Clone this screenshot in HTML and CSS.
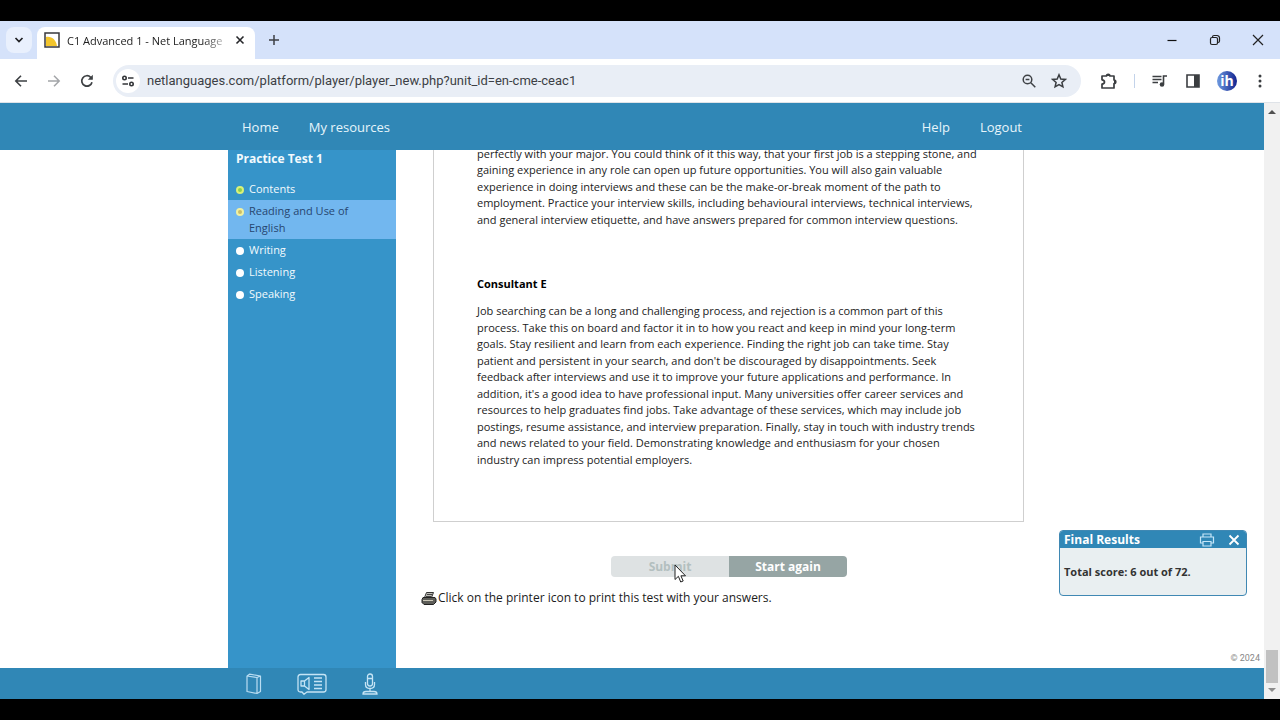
FILE: index.html
```html
<!DOCTYPE html>
<html lang="en">
<head>
<meta charset="utf-8">
<title>C1 Advanced 1 - Net Languages</title>
<link rel="stylesheet" href="styles.css">
</head>
<body>
<div class="browser">
  <div class="tabstrip">
    <button class="tab-search" aria-label="Search tabs"><svg width="10" height="10" viewBox="0 0 10 10"><path d="M1.5 3 5 6.5 8.500 3" fill="none" stroke="#1f2023" stroke-width="1.700"/></svg></button>
    <div class="tab">
      <svg class="favicon" width="16" height="16" viewBox="0 0 16 16"><rect x="1" y="1" width="14" height="14" fill="#fff" stroke="#38383c" stroke-width="1.500"/><path d="M2 5C8 4 12 8 13 14H2z" fill="#f3c52c"/></svg>
      <span class="tab-title">C1 Advanced 1 - Net Language</span>
      <button class="icon-btn tab-close" aria-label="Close tab"><svg width="10" height="10" viewBox="0 0 10 10"><path d="M1.500 1.500 8.500 8.500M8.500 1.500 1.500 8.500" stroke="#26272a" stroke-width="1.600"/></svg></button>
    </div>
    <button class="icon-btn new-tab" aria-label="New tab"><svg width="12" height="12" viewBox="0 0 12 12"><path d="M6 1v10M1 6h10" stroke="#3c3f44" stroke-width="1.500"/></svg></button>
    <div class="window-controls">
      <button class="icon-btn" aria-label="Minimize"><svg width="12" height="12" viewBox="0 0 12 12"><path d="M1.500 6.500h9" stroke="#111" stroke-width="1.200"/></svg></button>
      <button class="icon-btn" aria-label="Restore"><svg width="12" height="12" viewBox="0 0 12 12" fill="none" stroke="#222" stroke-width="1.200"><rect x="1.500" y="3.500" width="7" height="7" rx="1.500"/><path d="M3.500 3C3.500 2 4 1.500 5 1.500h3A2.500 2.500 0 0 1 10.500 4v3C10.500 8 10 8.500 9 8.500"/></svg></button>
      <button class="icon-btn" aria-label="Close"><svg width="12" height="12" viewBox="0 0 12 12"><path d="M1 1l10 10M11 1 1 11" stroke="#222" stroke-width="1.200"/></svg></button>
    </div>
  </div>

  <div class="toolbar">
    <button class="icon-btn" aria-label="Back"><svg width="14" height="14" viewBox="0 0 14 14"><path d="M13 7H2M7 1.800 1.800 7 7 12.200" fill="none" stroke="#3d4043" stroke-width="1.600"/></svg></button>
    <button class="icon-btn" aria-label="Forward"><svg width="14" height="14" viewBox="0 0 14 14"><path d="M1 7h11M7 1.800 12.200 7 7 12.200" fill="none" stroke="#a3a5a8" stroke-width="1.500"/></svg></button>
    <button class="icon-btn" aria-label="Reload"><svg width="14" height="14" viewBox="0 0 14 14"><path d="M12 8.200A5.200 5.200 0 1 1 10.700 3.300L12 4.700" fill="none" stroke="#3d4043" stroke-width="1.700"/><path d="M12.800.800V5.800H7.800z" fill="#3d4043"/></svg></button>
    <div class="omnibox">
      <button class="icon-btn site-info" aria-label="Site information"><svg width="14" height="12" viewBox="0 0 14 12" fill="none" stroke="#333538" stroke-width="1.600"><circle cx="3.500" cy="3" r="1.700"/><path d="M7 3h5.500M1.500 9H7"/><circle cx="10.500" cy="9" r="1.700"/></svg></button>
      <input class="url" type="text" aria-label="Address" value="netlanguages.com/platform/player/player_new.php?unit_id=en-cme-ceac1">
      <button class="icon-btn" aria-label="Zoom"><svg width="16" height="16" viewBox="0 0 16 16" fill="none" stroke="#3f4246" stroke-width="1.500"><circle cx="6.500" cy="6.500" r="4.300"/><path d="M9.800 9.800 14.300 14.300M4.600 6.500h3.800"/></svg></button>
      <button class="icon-btn" aria-label="Bookmark"><svg width="16" height="16" viewBox="0 0 16 16"><path d="M8 1.800 9.800 6l4.500.400-3.400 3 1 4.400L8 11.500l-3.900 2.300 1-4.400-3.400-3L6.200 6z" fill="none" stroke="#3a3d41" stroke-width="1.500"/></svg></button>
    </div>
    <div class="actions">
      <button class="icon-btn" aria-label="Extensions"><svg width="18" height="18" viewBox="0 0 18 18"><path d="M2 4h4.500a1.700 1.700 0 0 1 3.400 0H14v4a1.700 1.700 0 0 1 0 3.500V16H2v-4c3.300-.300 3.300-3.900 0-4.200z" fill="none" stroke="#3b3e41" stroke-width="1.700" stroke-linejoin="round"/><path d="M6.500 4a1.700 1.700 0 0 1 3.400 0zM14 8a1.700 1.700 0 0 1 0 3.500z" fill="#3b3e41"/></svg></button>
      <span class="divider"></span>
      <button class="icon-btn" aria-label="Media"><svg width="18" height="16" viewBox="0 0 18 16"><path d="M1.500 3.500h9M1.500 6.500h9M1.500 9.500h5.500M12.500 11V3H16" fill="none" stroke="#3b3e41" stroke-width="1.600"/><circle cx="11" cy="11.500" r="2.300" fill="#3b3e41"/></svg></button>
      <button class="icon-btn" aria-label="Side panel"><svg width="16" height="16" viewBox="0 0 16 16"><path d="M2 2h12v12H2z" fill="none" stroke="#3b3e41" stroke-width="1.600"/><path d="M9 2h5v12H9z" fill="#3b3e41"/></svg></button>
      <button class="icon-btn avatar" aria-label="Profile">ih</button>
      <button class="icon-btn menu" aria-label="Menu"><svg width="4" height="14" viewBox="0 0 4 14" fill="#3b3e41"><circle cx="2" cy="2" r="1.500"/><circle cx="2" cy="7" r="1.500"/><circle cx="2" cy="12" r="1.500"/></svg></button>
    </div>
  </div>

  <div class="viewport">
    <div class="site">
      <header class="topbar">
        <nav class="wrap topnav">
          <a href="#">Home</a>
          <a href="#">My resources</a>
          <a class="push" href="#">Help</a>
          <a href="#">Logout</a>
        </nav>
      </header>

      <div class="middle">
        <div class="wrap columns">
          <aside class="sidebar">
            <h1>Practice Test 1</h1>
            <a class="started" href="#">Contents</a>
            <a class="started current" href="#">Reading and Use of English</a>
            <a href="#">Writing</a>
            <a href="#">Listening</a>
            <a href="#">Speaking</a>
          </aside>
          <main class="content">
            <article class="card">
              <p>perfectly with your major. You could think of it this way, that your first job is a stepping stone, and<br>gaining experience in any role can open up future opportunities. You will also gain valuable<br>experience in doing interviews and these can be the make-or-break moment of the path to<br>employment. Practice your interview skills, including behavioural interviews, technical interviews,<br>and general interview etiquette, and have answers prepared for common interview questions.</p>
              <h2>Consultant E</h2>
              <p>Job searching can be a long and challenging process, and rejection is a common part of this<br>process. Take this on board and factor it in to how you react and keep in mind your long-term<br>goals. Stay resilient and learn from each experience. Finding the right job can take time. Stay<br>patient and persistent in your search, and don't be discouraged by disappointments. Seek<br>feedback after interviews and use it to improve your future applications and performance. In<br>addition, it's a good idea to have professional input. Many universities offer career services and<br>resources to help graduates find jobs. Take advantage of these services, which may include job<br>postings, resume assistance, and interview preparation. Finally, stay in touch with industry trends<br>and news related to your field. Demonstrating knowledge and enthusiasm for your chosen<br>industry can impress potential employers.</p>
            </article>
            <div class="buttons">
              <button class="submit" disabled>Submit</button>
              <button class="again">Start again</button>
              <svg class="cursor" width="12" height="19" viewBox="0 0 12 19"><path d="M1 1v14.500l3.400-3.200L6.700 18l2.500-1-2.300-5.200h4.600z" fill="#fff" stroke="#222"/></svg>
            </div>
            <div class="print-note">
              <svg width="16" height="16" viewBox="0 0 16 16"><path d="M5.500 2.500h7l-2 5h-7z" fill="#bdbdb6" stroke="#333"/><path d="M2 7.500h12l1 1.500v3l-2.500 2.500H3L1 12.500V9.500z" fill="#5d5d58" stroke="#222"/><path d="M2 10.500h10" stroke="#ccc8b8"/><path d="M6 4.500h5M5 6.500h5" stroke="#444"/></svg>
              <span>Click on the printer icon to print this test with your answers.</span>
            </div>
          </main>
        </div>

        <section class="results">
          <div class="results-head">
            <h2>Final Results</h2>
            <button class="icon-btn" aria-label="Print"><svg width="16" height="14" viewBox="0 0 16 14" fill="none" stroke="#c5e6f8" stroke-width="1.200"><path d="M4 4V1h8v3M4 10H1.500V4h13v6H12M4 8.500h8V13H4z"/></svg></button>
            <button class="icon-btn" aria-label="Close results"><svg width="12" height="12" viewBox="0 0 12 12"><path d="M1.500 1.500l9 9M10.500 1.500l-9 9" stroke="#fff" stroke-width="1.800"/></svg></button>
          </div>
          <p>Total score: 6 out of 72.</p>
        </section>
        <small class="copyright">© 2024</small>
      </div>

      <footer class="bottombar">
        <div class="wrap tools">
          <button class="icon-btn" aria-label="Dictionary"><svg width="16" height="22" viewBox="0 0 16 22" fill="none" stroke="#b9ddf2" stroke-width="1.200" stroke-linejoin="round"><path d="M1 3 11 4.500V20.500L1 18.500zM1 3 3.500 1.200 14.500 3V18.500L11 20.500M11 4.500 14.500 3"/></svg></button>
          <button class="icon-btn" aria-label="Audio script"><svg width="30" height="22" viewBox="0 0 30 22" fill="none" stroke="#c5e4f5" stroke-width="1.300" stroke-linejoin="round"><path d="M3.500 1.500h23Q29 1.500 29 4v12.500q0 2.500-2.500 2.500H10l-3 2.300L5 19H3.500Q1 19 1 16.500V4Q1 1.500 3.500 1.500zM4 8h3.500L12 4.500v12L7.500 13H4zM7.500 8v5"/><path d="M17 5h8M17 8.500h8M17 12h8M17 15.500h8"/></svg></button>
          <button class="icon-btn" aria-label="Record"><svg width="16" height="22" viewBox="0 0 16 22" fill="none" stroke="#c5e4f5" stroke-width="1.300"><rect x="5.500" y="1" width="5" height="12" rx="2.500"/><path d="M5.500 5.500h5M3.500 9v2.500q0 4 4.500 4t4.500-4V9M8 15.500v3M1 21q0-2.500 3-2.500h8q3 0 3 2.500z"/></svg></button>
        </div>
      </footer>
    </div>
    <div class="scrollbar">
      <svg width="8" height="4" viewBox="0 0 8 4"><path d="M0 4 4 0l4 4z" fill="#505050"/></svg>
      <span class="thumb"></span>
      <svg width="8" height="4" viewBox="0 0 8 4"><path d="M0 0l4 4 4-4z" fill="#8c8c8c"/></svg>
    </div>
  </div>
</div>
</body>
</html>
```
FILE: styles.css
```css
* { box-sizing: border-box; }

body {
  margin: 0;
  background: #000;
  font-family: "Open Sans", "Noto Sans", sans-serif;
  font-size: 11px;
  color: #222;
}

h1, h2, p { margin: 0; }
a { color: inherit; text-decoration: none; }
button { font: inherit; border: 0; padding: 0; }
svg { display: block; flex: none; }

.icon-btn {
  display: flex;
  align-items: center;
  justify-content: center;
  background: none;
}

.browser {
  display: flex;
  flex-direction: column;
  height: 100vh;
  padding: 21px 0;
}

/* Tab strip */
.tabstrip {
  display: flex;
  align-items: center;
  height: 38px;
  padding-left: 6px;
  background: #d5e2fa;
}
.tab-search {
  display: flex;
  align-items: center;
  justify-content: center;
  width: 26px;
  height: 26px;
  border-radius: 8px;
  background: #e9f0fd;
}
.tab {
  display: flex;
  align-items: center;
  align-self: stretch;
  width: 218px;
  margin: 6px 0 0 5px;
  padding: 0 10px 6px 7px;
  border-radius: 8px 8px 0 0;
  background: #fff;
}
.tab-title {
  flex: 1;
  min-width: 0;
  margin: 0 8px 0 7px;
  white-space: nowrap;
  mask-image: linear-gradient(to right, #000 85%, rgb(0 0 0 / 0.2));
}
.new-tab { margin-left: 13px; }
.window-controls {
  display: flex;
  gap: 31px;
  margin-left: auto;
  padding-right: 16px;
}

/* Toolbar */
.toolbar {
  display: flex;
  align-items: center;
  gap: 19px;
  height: 44px;
  padding: 0 18px 0 14px;
  background: #fff;
  border-bottom: 1px solid #dfe3e8;
}
.omnibox {
  display: flex;
  align-items: center;
  flex: 1;
  gap: 14px;
  height: 32px;
  padding: 0 14px 0 3px;
  border-radius: 16px;
  background: #e9eef6;
}
.site-info {
  width: 24px;
  height: 24px;
  border-radius: 50%;
  background: #fff;
}
.url {
  flex: 1;
  min-width: 0;
  margin-left: -7px;
  padding: 0;
  border: 0;
  background: none;
  font-family: Roboto, "Open Sans", sans-serif;
  font-size: 13px;
  color: #3c3f45;
}
.actions {
  display: flex;
  align-items: center;
  gap: 16px;
}
.divider {
  width: 1px;
  height: 14px;
  background: #c3d3ea;
}
.avatar {
  width: 20px;
  height: 20px;
  border-radius: 50%;
  background: linear-gradient(to right, #6f9be0, #12238f);
  color: #fff;
  font-size: 14px;
  font-weight: 700;
}
.menu { padding-left: 5px; }

/* Page */
.viewport {
  display: flex;
  flex: 1;
  min-height: 0;
  background: #fff;
}
.site {
  display: flex;
  flex-direction: column;
  flex: 1;
  min-width: 0;
}
.wrap {
  width: 100%;
  max-width: 808px;
  margin: 0 auto;
}
.topbar {
  display: flex;
  align-items: center;
  height: 47px;
  background: #3087b6;
}
.topnav {
  display: flex;
  gap: 30px;
  padding: 0 14px;
  font-size: 13px;
  font-weight: 500;
  line-height: 20px;
  color: #e6f5fb;
}
.push { margin-left: auto; }

.middle {
  position: relative;
  flex: 1;
  min-height: 0;
}
.columns {
  display: flex;
  height: 100%;
}
.sidebar {
  width: 168px;
  background: #3694c9;
  color: #f2fafd;
}
.sidebar h1 {
  padding: 0 8px;
  margin-bottom: 11px;
  font-size: 12px;
  line-height: 17px;
}
.sidebar a {
  display: block;
  position: relative;
  padding: 2px 30px 3px 21px;
  font-weight: 500;
  line-height: 17px;
}
.sidebar a::before {
  content: "";
  box-sizing: border-box;
  position: absolute;
  left: 8px;
  top: 8px;
  width: 8px;
  height: 8px;
  border-radius: 50%;
  background: #fff;
}
.sidebar .started::before {
  border: 2px solid #d8f27a;
  background: #8fd04c;
}
.sidebar .current {
  background: #72b7ef;
  color: #27466f;
}
.sidebar .current::before {
  border-color: #f2f1a0;
  background: #c9bd6a;
}

.content {
  display: flex;
  flex-direction: column;
  justify-content: flex-end;
  flex: 1;
  min-width: 0;
  padding: 0 12px 60px 25px;
  overflow: hidden;
}
.card {
  margin-left: 12px;
  padding: 0 43px 53px;
  border: 1px solid #cfcfcf;
  line-height: 1.5;
  white-space: nowrap;
}
.card h2 {
  margin: 47px 0 11px;
  font-size: 11px;
  line-height: 17px;
  color: #000;
}
.buttons {
  display: flex;
  position: relative;
  width: 236px;
  margin: 34px 0 11px 190px;
}
.buttons button {
  flex: 1;
  height: 21px;
  font-size: 12px;
  line-height: 20px;
  font-weight: 700;
}
.submit {
  border-radius: 4px 0 0 4px;
  background: #dee2e3;
  color: #b3bfbf;
}
.again {
  border-radius: 0 4px 4px 0;
  background: #96a5a4;
  color: #fff;
}
.cursor {
  position: absolute;
  left: 63px;
  top: 8px;
}
.print-note {
  display: flex;
  align-items: center;
  gap: 1px;
  font-size: 12px;
  line-height: 20px;
  color: #1b1b1b;
}

.results {
  position: absolute;
  right: 17px;
  bottom: 72px;
  width: 188px;
  border: 1px solid #3f88b3;
  border-radius: 4px;
  overflow: hidden;
  background: #e9eff1;
}
.results-head {
  display: flex;
  align-items: center;
  gap: 13px;
  height: 17px;
  padding: 0 6px 0 4px;
  background: #3087b6;
  color: #fff;
}
.results-head h2 {
  flex: 1;
  font-size: 12px;
  line-height: 16px;
}
.results p {
  padding: 15px 4px;
  font-weight: 700;
  line-height: 17px;
  color: #333;
}
.copyright {
  position: absolute;
  right: 4px;
  bottom: 3px;
  font-family: Roboto, "Liberation Sans", sans-serif;
  font-size: 9px;
  line-height: 14px;
  color: #888;
}

.bottombar {
  display: flex;
  align-items: center;
  height: 31px;
  background: #3087b6;
}
.tools {
  display: flex;
  gap: 35px;
  padding-left: 18px;
}

.scrollbar {
  display: flex;
  flex-direction: column;
  align-items: center;
  width: 16px;
  padding: 7px 0;
  background: #f1f1f1;
}
.thumb {
  width: 12px;
  height: 33px;
  margin: auto 0 5px;
  background: #c1c1c1;
}
```
